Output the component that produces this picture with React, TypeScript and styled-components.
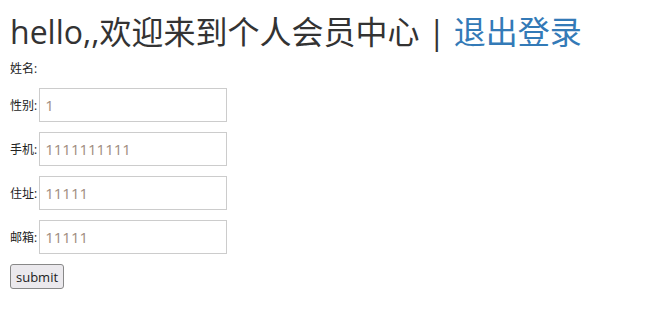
import React from "react";
import styled, { createGlobalStyle } from "styled-components";

const GlobalStyle = createGlobalStyle`
  html, body {
    margin: 0;
    padding: 0;
    background: #fff;
  }
  body {
    font-family: "Open Sans", "Noto Sans CJK SC", sans-serif;
    color: #333;
  }
`;

const Page = styled.div`
  padding: 0 10px;
`;

const Title = styled.h1`
  margin: 12px 0 8px;
  font-size: 32px;
  font-weight: 400;
  line-height: 40px;
  color: #333;

  a {
    color: #337ab7;
    text-decoration: none;
  }
`;

const Form = styled.form`
  display: flex;
  flex-direction: column;
  align-items: flex-start;
`;

const Row = styled.div<{ $plain?: boolean }>`
  display: flex;
  align-items: center;
  height: ${(p) => (p.$plain ? "17px" : "34px")};
  margin-bottom: ${(p) => (p.$plain ? "11px" : "10px")};
  font-size: 12px;
  line-height: 17px;
`;

const Label = styled.label`
  padding-right: 2px;
  font-size: 12px;
  color: #222;
`;

const Field = styled.input`
  box-sizing: border-box;
  width: 188px;
  height: 34px;
  margin: 0;
  padding: 0 5px;
  border: 1px solid #ccc;
  border-radius: 0;
  font-family: "Open Sans", sans-serif;
  font-size: 15px;
  color: #555;
  outline: none;

  &::placeholder {
    color: #a08c7e;
  }
`;

const Submit = styled.button`
  height: 25px;
  padding: 0 5px;
  border: 1px solid #888;
  border-radius: 3px;
  background: #ebe9ed;
  font-family: "Open Sans", sans-serif;
  font-size: 13px;
  color: #222;
`;

const fields = [
  { label: "性别:", value: "1" },
  { label: "手机:", value: "1111111111" },
  { label: "住址:", value: "11111" },
  { label: "邮箱:", value: "11111" },
];

export default function App() {
  return (
    <Page>
      <GlobalStyle />
      <Title>
        hello,,欢迎来到个人会员中心 | <a href="#">退出登录</a>
      </Title>
      <Form onSubmit={(e) => e.preventDefault()}>
        <Row $plain>
          <Label>姓名:</Label>
        </Row>
        {fields.map((f) => (
          <Row key={f.label}>
            <Label>{f.label}</Label>
            <Field placeholder={f.value} />
          </Row>
        ))}
        <Submit type="submit">submit</Submit>
      </Form>
    </Page>
  );
}
